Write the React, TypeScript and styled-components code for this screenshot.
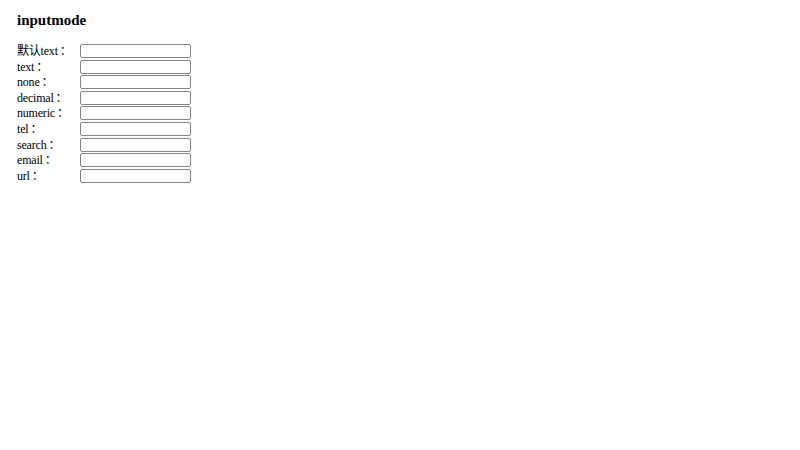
import React from "react"
import styled, { createGlobalStyle } from "styled-components"

const modes = [
  { label: "默认text", mode: undefined },
  { label: "text", mode: "text" },
  { label: "none", mode: "none" },
  { label: "decimal", mode: "decimal" },
  { label: "numeric", mode: "numeric" },
  { label: "tel", mode: "tel" },
  { label: "search", mode: "search" },
  { label: "email", mode: "email" },
  { label: "url", mode: "url" },
] as const

export default function App() {
  return (
    <>
      <GlobalStyle />
      <StyledPage>
        <StyledTitle>inputmode</StyledTitle>
        <StyledForm>
          {modes.map(({ label, mode }) => (
            <StyledRow key={label}>
              <StyledLabel>
                {label}
                <StyledColon>：</StyledColon>
              </StyledLabel>
              <StyledInput type="text" inputMode={mode} />
            </StyledRow>
          ))}
        </StyledForm>
      </StyledPage>
    </>
  )
}

const GlobalStyle = createGlobalStyle`
  html, body {
    margin: 0;
    background: #ffffff;
  }
  body {
    font-family: "Liberation Serif", "Noto Sans CJK SC", serif;
    color: #000000;
  }
`

const StyledPage = styled.div`
  padding: 12px 0 0 17px;
`

const StyledTitle = styled.h3`
  margin: 0 0 15px;
  font-size: 15px;
  line-height: 17px;
  font-weight: bold;
`

const StyledForm = styled.div`
  display: flex;
  flex-direction: column;
  gap: 1.6px;
`

const StyledRow = styled.label`
  display: flex;
  align-items: center;
  height: 14px;
`

const StyledLabel = styled.span`
  width: 63px;
  font-size: 12px;
  line-height: 14px;
  letter-spacing: -0.2px;
  white-space: nowrap;
`

const StyledColon = styled.span`
  margin-left: 2px;
`

const StyledInput = styled.input`
  box-sizing: border-box;
  width: 111px;
  height: 14px;
  margin: 0;
  padding: 0 2px;
  border: 1px solid #858585;
  border-radius: 2px;
  background: #ffffff;
  font-size: 10px;
`
